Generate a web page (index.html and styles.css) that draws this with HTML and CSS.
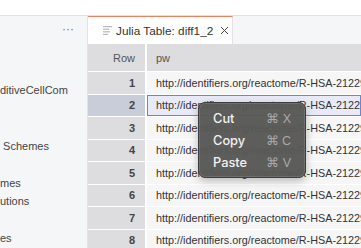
FILE: index.html
```html
<!DOCTYPE html>
<html lang="en">
<head>
  <meta charset="UTF-8" />
  <title>Julia Table: diff1_2</title>
  <link rel="stylesheet" href="styles.css">
</head>
<body>
  <div class="topbar"></div>
  <div class="main">
    <aside class="sidebar">
      <div class="sidebar-head"><span class="more">···</span></div>
      <ul class="tree">
        <li>ditiveCellCom</li>
        <li></li>
        <li></li>
        <li>&nbsp;Schemes</li>
        <li></li>
        <li>mes</li>
        <li>utions</li>
        <li></li>
        <li>es</li>
      </ul>
    </aside>
    <section class="editor">
      <div class="tabs">
        <div class="tab active">
          <svg class="tab-icon" width="9" height="9" viewBox="0 0 9 9">
            <rect x="0" y="0" width="9" height="1.2" fill="#b8b8b8"/>
            <rect x="0" y="2.6" width="6" height="1.2" fill="#b8b8b8"/>
            <rect x="0" y="5.2" width="7" height="1.2" fill="#b8b8b8"/>
            <rect x="0" y="7.8" width="5" height="1.2" fill="#b8b8b8"/>
          </svg>
          <span class="tab-title">Julia Table: diff1_2</span>
          <svg class="tab-close" width="9" height="9" viewBox="0 0 9 9">
            <path d="M1 1 L8 8 M8 1 L1 8" stroke="#444" stroke-width="1" fill="none"/>
          </svg>
        </div>
      </div>
      <div class="table" id="table">
        <div class="cell head rownum">Row</div>
        <div class="cell head">pw</div>
      </div>
      <div class="ctx-menu">
        <div class="ctx-item"><span>Cut</span><span class="key">⌘ X</span></div>
        <div class="ctx-item"><span>Copy</span><span class="key">⌘ C</span></div>
        <div class="ctx-item"><span>Paste</span><span class="key">⌘ V</span></div>
      </div>
    </section>
  </div>
  <script>
    const table = document.getElementById('table');
    const url = 'http://identifiers.org/reactome/R-HSA-2122947';
    for (let i = 1; i <= 8; i++) {
      const num = document.createElement('div');
      num.className = 'cell rownum' + (i === 2 ? ' selected' : '');
      num.textContent = i;
      const val = document.createElement('div');
      val.className = 'cell value' + (i === 2 ? ' selected' : '');
      val.textContent = url;
      table.appendChild(num);
      table.appendChild(val);
    }
  </script>
</body>
</html>
```

FILE: styles.css
```css
* { box-sizing: border-box; margin: 0; padding: 0; }
html, body {
  width: 361px;
  height: 248px;
  overflow: hidden;
}
body {
  font-family: 'Liberation Sans', Arial, sans-serif;
  background: #ffffff;
  color: #333;
}
.topbar {
  height: 16px;
  background: #ffffff;
  border-bottom: 1px solid #e2e2e4;
}
.main {
  display: flex;
  height: 232px;
}
.sidebar {
  width: 88px;
  flex: none;
  background: #f5f6f8;
  border-right: 1px solid #e2e2e4;
  overflow: hidden;
}
.sidebar-head {
  display: flex;
  justify-content: flex-end;
  height: 28px;
  padding: 6px 13px 0 0;
}
.more {
  font-size: 12px;
  color: #777;
}
.tree {
  list-style: none;
  padding-top: 37px;
}
.tree li {
  height: 18.5px;
  line-height: 18.5px;
  font-size: 11px;
  color: #444;
  white-space: nowrap;
}
.editor {
  flex: 1;
  position: relative;
  overflow: hidden;
}
.tabs {
  display: flex;
  height: 28px;
  background: #f5f6f8;
}
.tab {
  display: flex;
  align-items: center;
  width: 145px;
  padding: 0 0 0 15px;
  gap: 4px;
  font-size: 11.8px;
}
.tab.active {
  background: #ffffff;
  border-top: 1px solid #e8825a;
  border-right: 1px solid #e2e2e4;
}
.tab-title {
  color: #333;
  white-space: nowrap;
}
.tab-close { margin-left: 3px; }
.table {
  display: grid;
  grid-template-columns: 57px 1fr;
  grid-template-rows: 27px repeat(8, 21.5px);
  gap: 1px 2px;
  background: #ffffff;
  font-size: 10.8px;
}
.cell {
  display: flex;
  align-items: center;
  white-space: nowrap;
  overflow: hidden;
  background: #f6f6f7;
  padding-left: 9px;
}
.cell.head {
  background: #dddde0;
  color: #555;
  font-size: 11px;
}
.cell.rownum {
  justify-content: flex-end;
  padding: 0 10px 0 0;
  background: #dddde0;
  color: #444;
  font-weight: bold;
  font-size: 11px;
}
.cell.head.rownum { font-weight: normal; color: #555; }
.cell.value { color: #333; }
.cell.rownum.selected { background: #c9cdda; }
.cell.value.selected {
  background: #e8ebf7;
  border: 1px solid #6a84d8;
  padding-left: 8px;
}
.ctx-menu {
  position: absolute;
  left: 110px;
  top: 86px;
  width: 108px;
  padding: 4px 0;
  background: rgba(88, 88, 86, 0.97);
  border: 1px solid #3e3e3c;
  border-radius: 7px;
  box-shadow: 0 3px 8px rgba(0, 0, 0, 0.25), inset 0 0 0 1px rgba(255, 255, 255, 0.12);
}
.ctx-item {
  display: flex;
  justify-content: space-between;
  align-items: center;
  height: 22px;
  padding: 0 14px 0 14px;
  font-family: Inter, 'Liberation Sans', sans-serif;
  font-size: 12.8px;
  font-weight: 500;
  color: #f2f2f2;
}
.ctx-item .key {
  color: #a9a9a9;
  font-family: 'Liberation Sans', sans-serif;
  font-size: 12.5px;
  font-weight: normal;
}
```
